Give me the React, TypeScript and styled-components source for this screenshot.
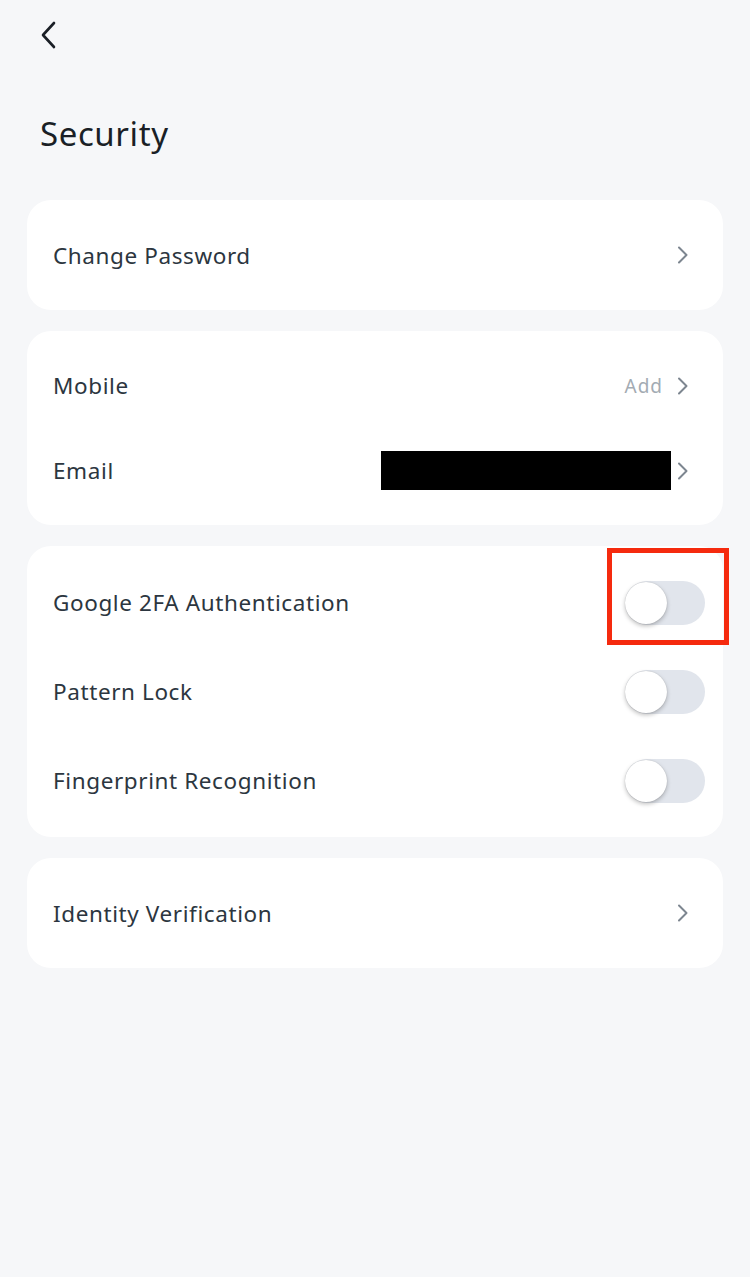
import { createGlobalStyle, styled } from "styled-components";

const GlobalStyle = createGlobalStyle`
  html, body {
    margin: 0;
    padding: 0;
    background: #f6f7f9;
  }
  body {
    font-family: "Noto Sans", "Open Sans", sans-serif;
    -webkit-font-smoothing: antialiased;
  }
`;

const Page = styled.div`
  width: 750px;
  min-height: 1277px;
  background: #f6f7f9;
  box-sizing: border-box;
  padding: 0 27px;
`;

const TopBar = styled.div`
  height: 70px;
  display: flex;
  align-items: center;
  padding-left: 12px;
`;

const BackButton = styled.button`
  border: none;
  background: none;
  padding: 0;
  width: 24px;
  height: 30px;
  display: flex;
  align-items: center;
  cursor: pointer;
`;

const Title = styled.h1`
  margin: 39px 0 41px 13px;
  font-size: 33px;
  font-weight: 400;
  color: #1a1f26;
  line-height: 50px;
  letter-spacing: 0.6px;
`;

const List = styled.div`
  display: flex;
  flex-direction: column;
  gap: 21px;
`;

const Card = styled.div`
  background: #ffffff;
  border-radius: 24px;
  padding: 12px 0;
`;

const Row = styled.div<{ $height: number }>`
  position: relative;
  height: ${(p) => p.$height}px;
  display: flex;
  align-items: center;
  padding: 0 18px 0 26px;
`;

const Label = styled.span`
  flex: 1;
  font-size: 22.5px;
  color: #2c3640;
  letter-spacing: 0.6px;
`;

const Hint = styled.span`
  font-size: 19px;
  color: #a3abb3;
  margin-right: 14px;
  letter-spacing: 1px;
`;

const Redacted = styled.div`
  width: 290px;
  height: 39px;
  background: #000;
  margin-right: 6px;
`;

const ChevronWrap = styled.span`
  width: 16px;
  display: flex;
  justify-content: flex-start;
  margin-right: 12px;
`;

const Track = styled.div`
  position: relative;
  width: 80px;
  height: 44px;
  border-radius: 22px;
  background: #e1e5ec;
`;

const Knob = styled.div`
  position: absolute;
  left: 0;
  top: 1px;
  width: 42px;
  height: 42px;
  border-radius: 50%;
  background: #fff;
  box-shadow: 0 2px 4px rgba(0, 0, 0, 0.25), 0 0 1px rgba(0, 0, 0, 0.2);
`;

const Highlight = styled.div`
  position: absolute;
  right: -6px;
  top: -10px;
  width: 122px;
  height: 97px;
  box-sizing: border-box;
  border: 5px solid #f52a0e;
`;

function Chevron() {
  return (
    <ChevronWrap>
      <svg width="12" height="18" viewBox="0 0 12 18" fill="none">
        <path
          d="M2 1.5 L9.5 9 L2 16.5"
          stroke="#7d8690"
          strokeWidth="2"
          strokeLinecap="round"
          strokeLinejoin="round"
        />
      </svg>
    </ChevronWrap>
  );
}

function Toggle() {
  return (
    <Track>
      <Knob />
    </Track>
  );
}

export default function App() {
  return (
    <>
      <GlobalStyle />
      <Page>
        <TopBar>
          <BackButton aria-label="back">
            <svg width="20" height="28" viewBox="0 0 20 28" fill="none">
              <path
                d="M15 2 L4 14 L15 26"
                stroke="#1a1f26"
                strokeWidth="2.6"
                strokeLinecap="round"
                strokeLinejoin="round"
              />
            </svg>
          </BackButton>
        </TopBar>
        <Title>Security</Title>
        <List>
          <Card>
            <Row $height={86}>
              <Label>Change Password</Label>
              <Chevron />
            </Row>
          </Card>
          <Card>
            <Row $height={85}>
              <Label>Mobile</Label>
              <Hint>Add</Hint>
              <Chevron />
            </Row>
            <Row $height={85}>
              <Label>Email</Label>
              <Redacted />
              <Chevron />
            </Row>
          </Card>
          <Card>
            <Row $height={89}>
              <Label>Google 2FA Authentication</Label>
              <Toggle />
              <Highlight />
            </Row>
            <Row $height={89}>
              <Label>Pattern Lock</Label>
              <Toggle />
            </Row>
            <Row $height={89}>
              <Label>Fingerprint Recognition</Label>
              <Toggle />
            </Row>
          </Card>
          <Card>
            <Row $height={86}>
              <Label>Identity Verification</Label>
              <Chevron />
            </Row>
          </Card>
        </List>
      </Page>
    </>
  );
}
